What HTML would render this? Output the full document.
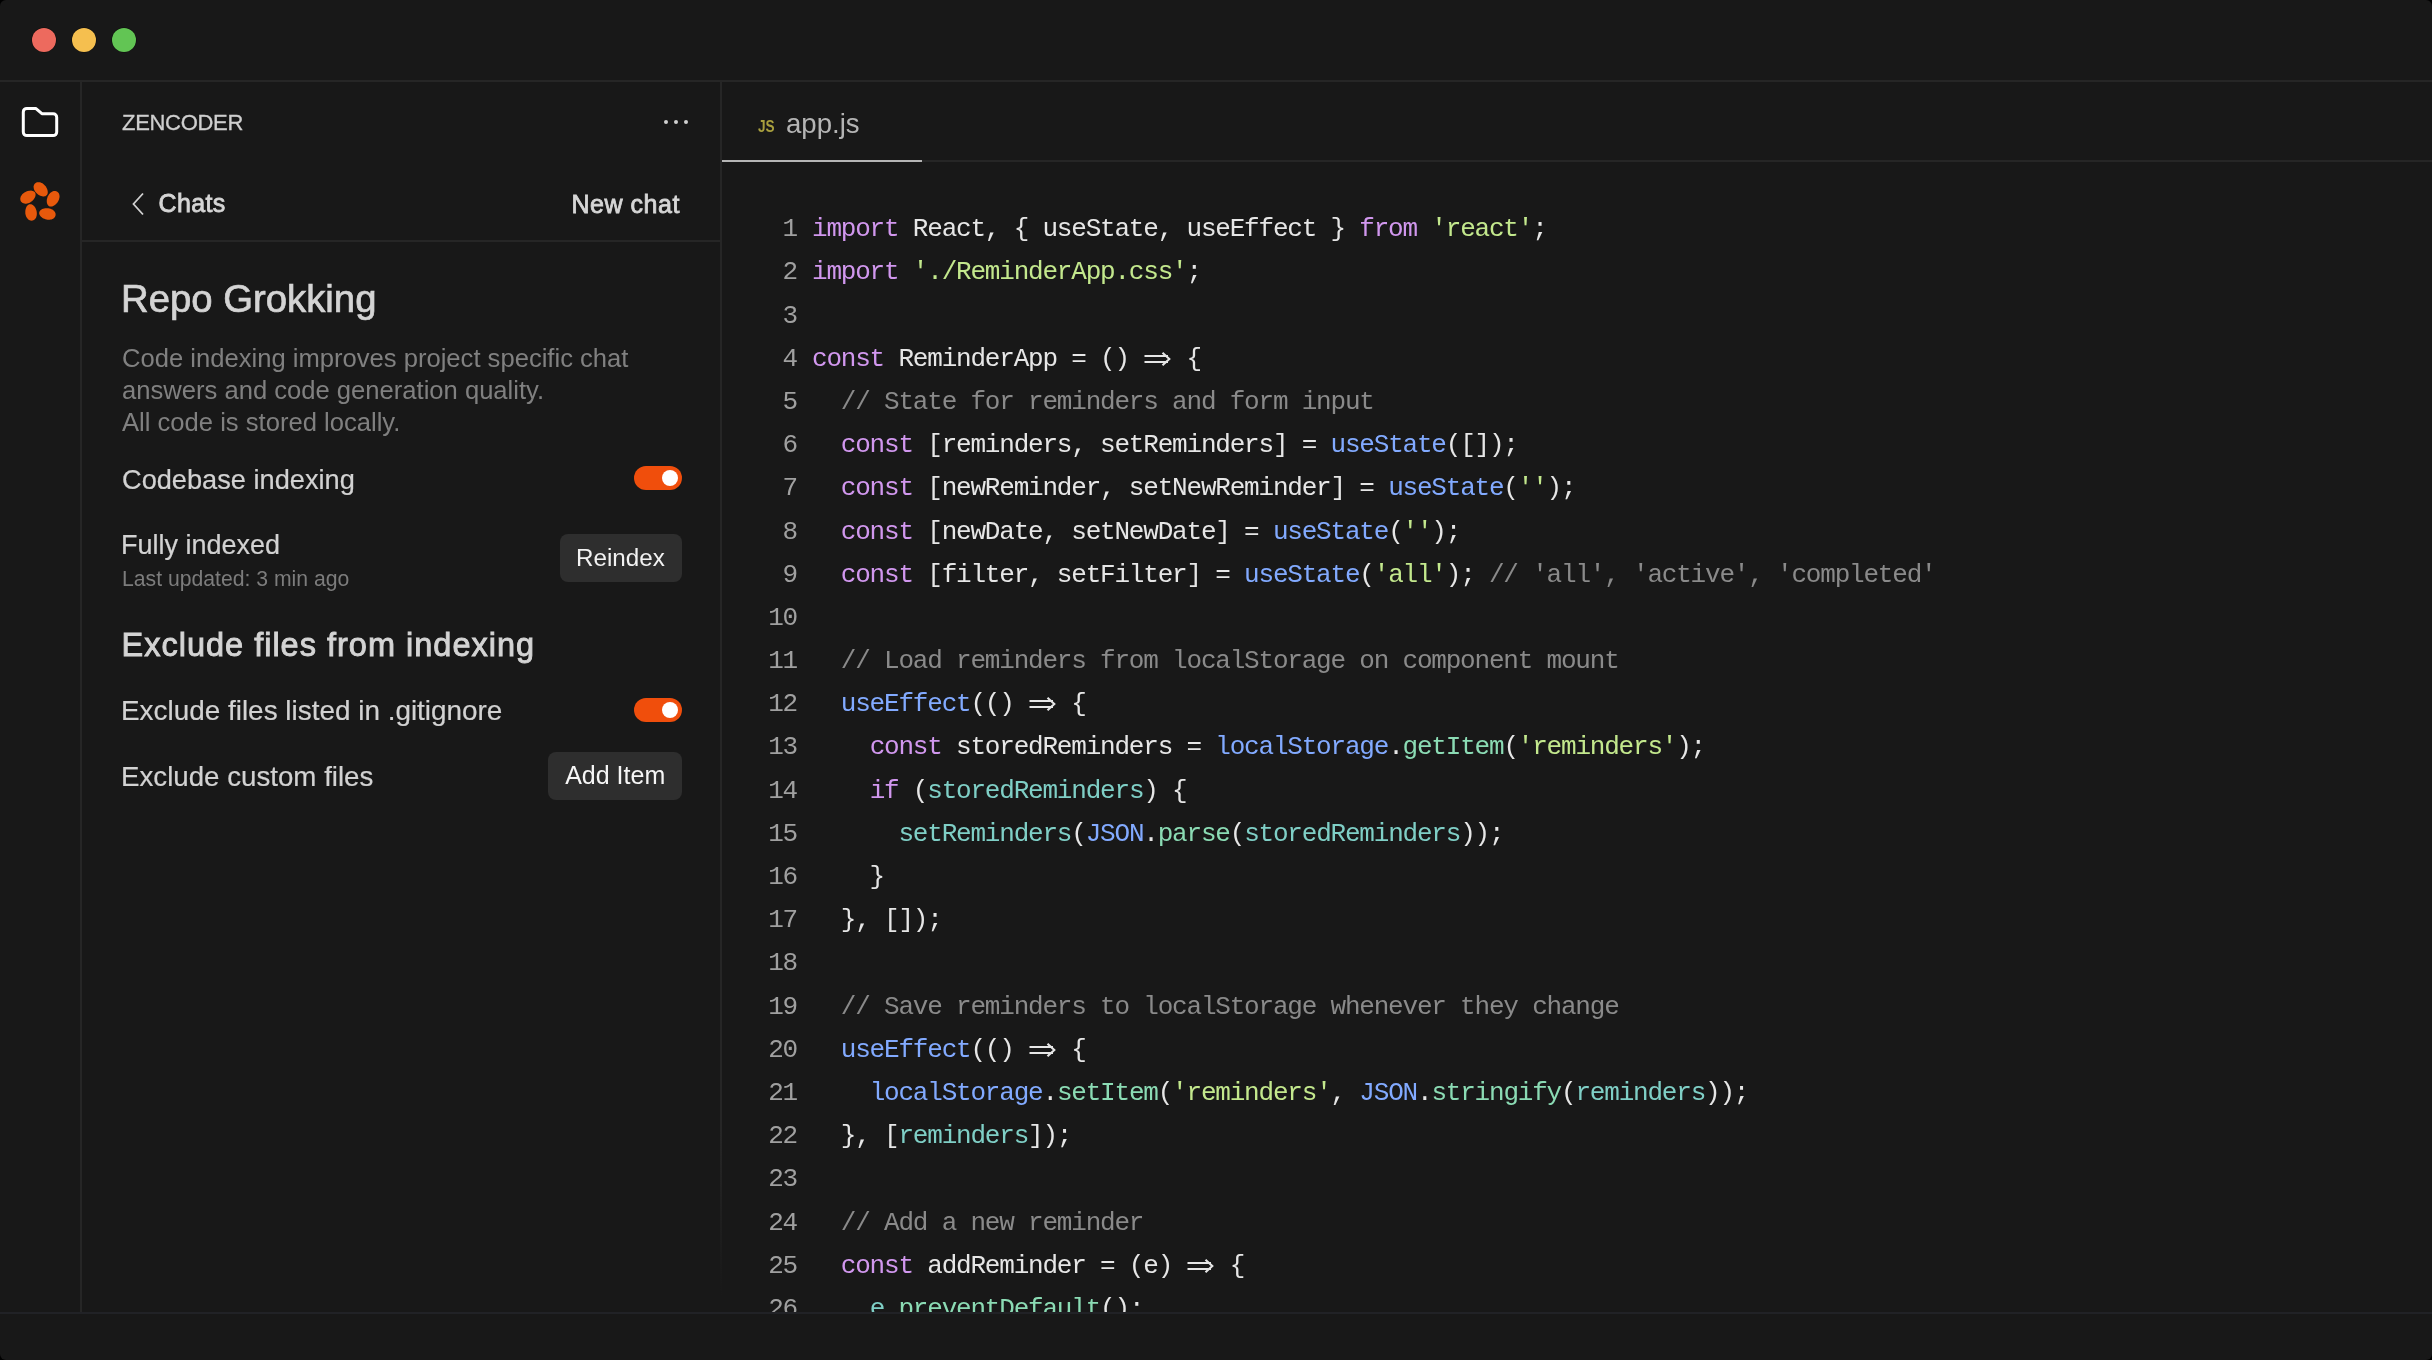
<!DOCTYPE html>
<html><head><meta charset="utf-8">
<style>
*{margin:0;padding:0;box-sizing:border-box}
html,body{width:2432px;height:1360px;overflow:hidden;background:#000}
body{font-family:"Liberation Sans",sans-serif;position:relative;-webkit-font-smoothing:antialiased}
.win{position:absolute;left:0;top:0;width:2432px;height:1360px;background:#181818;border-radius:6px;overflow:hidden;will-change:transform}
.abs{position:absolute;white-space:nowrap}
.hl{position:absolute;background:#262626}
.dot{position:absolute;border-radius:50%;width:24px;height:24px;top:28px;box-shadow:0 0 0 0.5px rgba(0,0,0,.5)}
.t{position:absolute;white-space:nowrap;line-height:1}
.btn{position:absolute;background:#2e2e2e;border-radius:8px}
.tog{position:absolute;width:48px;height:24px;border-radius:12px;background:#f04e0c}
.tog i{position:absolute;right:4px;top:4px;width:16px;height:16px;border-radius:50%;background:#fff}
.code{position:absolute;left:722px;top:162px;width:1710px;height:1150px;overflow:hidden}
.lines{position:absolute;left:0;top:46.2px;font-family:"Liberation Mono",monospace;font-size:26px;letter-spacing:-1.2px;line-height:43.2px;color:#e6e6e6}
.ln{height:43.2px;position:relative}
.n{position:absolute;left:0;width:75px;text-align:right;color:#a0a0a0;white-space:pre}
.cd{position:absolute;left:90px;white-space:pre}
.k{color:#d197ee}.s{color:#c3e88d}.b{color:#82aaff}.t2{color:#8bdbb4}.v{color:#7fcfc6}.c{color:#8a8a8a}
span.t{position:static;color:#89dcb8}
.ar{display:inline-block;width:28.8px;height:20px;vertical-align:-3px}
.ar svg{display:block}
</style></head><body>
<div class="win">
  <!-- traffic lights -->
  <div class="dot" style="left:32px;background:#ed6a5e"></div>
  <div class="dot" style="left:72px;background:#f5bf4f"></div>
  <div class="dot" style="left:112px;background:#62c554"></div>

  <!-- borders -->
  <div class="hl" style="left:0;top:80px;width:2432px;height:2px"></div>
  <div class="hl" style="left:80px;top:82px;width:2px;height:1230px"></div>
  <div class="hl" style="left:720px;top:82px;width:2px;height:1230px;background:linear-gradient(to bottom,#262626 0,#262626 1050px,rgba(38,38,38,0) 1215px)"></div>
  <div class="hl" style="left:82px;top:240px;width:638px;height:2px"></div>
  <div class="hl" style="left:722px;top:160px;width:1710px;height:2px"></div>
  <div class="hl" style="left:722px;top:160px;width:200px;height:2px;background:#b5b5b5"></div>
  <div class="hl" style="left:0;top:1312px;width:2432px;height:2px;background:#212226"></div>

  <!-- activity bar icons -->
  <svg class="abs" style="left:20px;top:104px" width="40" height="36" viewBox="0 0 40 36">
    <path d="M3.3 7.9a3.5 3.5 0 0 1 3.5-3.5h8.9l6.2 5.3h11.3a3.5 3.5 0 0 1 3.5 3.5v14.9a3.5 3.5 0 0 1-3.5 3.5H6.8a3.5 3.5 0 0 1-3.5-3.5z" fill="none" stroke="#fff" stroke-width="3" stroke-linejoin="round"/>
  </svg>
  <svg class="abs" style="left:15px;top:176px" width="50" height="50" viewBox="0 0 50 50">
    <g fill="#e8590c"><path d="M8.30 0.00 L8.23 0.70 L8.02 1.39 L7.67 2.06 L7.19 2.70 L6.58 3.30 L5.87 3.86 L5.05 4.36 L4.15 4.79 L3.18 5.15 L2.15 5.42 L1.08 5.61 L0.00 5.70 L-1.08 5.70 L-2.15 5.59 L-3.18 5.39 L-4.15 5.08 L-5.05 4.69 L-5.87 4.20 L-6.58 3.64 L-7.19 3.00 L-7.67 2.30 L-8.02 1.56 L-8.23 0.79 L-8.30 0.00 L-8.23 -0.79 L-8.02 -1.56 L-7.67 -2.30 L-7.19 -3.00 L-6.58 -3.64 L-5.87 -4.20 L-5.05 -4.69 L-4.15 -5.08 L-3.18 -5.39 L-2.15 -5.59 L-1.08 -5.70 L-0.00 -5.70 L1.08 -5.61 L2.15 -5.42 L3.18 -5.15 L4.15 -4.79 L5.05 -4.36 L5.87 -3.86 L6.58 -3.30 L7.19 -2.70 L7.67 -2.06 L8.02 -1.39 L8.23 -0.70Z" transform="translate(25.8 13.4) rotate(46)"/><path d="M8.30 0.00 L8.23 0.70 L8.02 1.39 L7.67 2.06 L7.19 2.70 L6.58 3.30 L5.87 3.86 L5.05 4.36 L4.15 4.79 L3.18 5.15 L2.15 5.42 L1.08 5.61 L0.00 5.70 L-1.08 5.70 L-2.15 5.59 L-3.18 5.39 L-4.15 5.08 L-5.05 4.69 L-5.87 4.20 L-6.58 3.64 L-7.19 3.00 L-7.67 2.30 L-8.02 1.56 L-8.23 0.79 L-8.30 0.00 L-8.23 -0.79 L-8.02 -1.56 L-7.67 -2.30 L-7.19 -3.00 L-6.58 -3.64 L-5.87 -4.20 L-5.05 -4.69 L-4.15 -5.08 L-3.18 -5.39 L-2.15 -5.59 L-1.08 -5.70 L-0.00 -5.70 L1.08 -5.61 L2.15 -5.42 L3.18 -5.15 L4.15 -4.79 L5.05 -4.36 L5.87 -3.86 L6.58 -3.30 L7.19 -2.70 L7.67 -2.06 L8.02 -1.39 L8.23 -0.70Z" transform="translate(38 22.8) rotate(118)"/><path d="M8.30 0.00 L8.23 0.70 L8.02 1.39 L7.67 2.06 L7.19 2.70 L6.58 3.30 L5.87 3.86 L5.05 4.36 L4.15 4.79 L3.18 5.15 L2.15 5.42 L1.08 5.61 L0.00 5.70 L-1.08 5.70 L-2.15 5.59 L-3.18 5.39 L-4.15 5.08 L-5.05 4.69 L-5.87 4.20 L-6.58 3.64 L-7.19 3.00 L-7.67 2.30 L-8.02 1.56 L-8.23 0.79 L-8.30 0.00 L-8.23 -0.79 L-8.02 -1.56 L-7.67 -2.30 L-7.19 -3.00 L-6.58 -3.64 L-5.87 -4.20 L-5.05 -4.69 L-4.15 -5.08 L-3.18 -5.39 L-2.15 -5.59 L-1.08 -5.70 L-0.00 -5.70 L1.08 -5.61 L2.15 -5.42 L3.18 -5.15 L4.15 -4.79 L5.05 -4.36 L5.87 -3.86 L6.58 -3.30 L7.19 -2.70 L7.67 -2.06 L8.02 -1.39 L8.23 -0.70Z" transform="translate(32.4 37.9) rotate(190)"/><path d="M8.30 0.00 L8.23 0.70 L8.02 1.39 L7.67 2.06 L7.19 2.70 L6.58 3.30 L5.87 3.86 L5.05 4.36 L4.15 4.79 L3.18 5.15 L2.15 5.42 L1.08 5.61 L0.00 5.70 L-1.08 5.70 L-2.15 5.59 L-3.18 5.39 L-4.15 5.08 L-5.05 4.69 L-5.87 4.20 L-6.58 3.64 L-7.19 3.00 L-7.67 2.30 L-8.02 1.56 L-8.23 0.79 L-8.30 0.00 L-8.23 -0.79 L-8.02 -1.56 L-7.67 -2.30 L-7.19 -3.00 L-6.58 -3.64 L-5.87 -4.20 L-5.05 -4.69 L-4.15 -5.08 L-3.18 -5.39 L-2.15 -5.59 L-1.08 -5.70 L-0.00 -5.70 L1.08 -5.61 L2.15 -5.42 L3.18 -5.15 L4.15 -4.79 L5.05 -4.36 L5.87 -3.86 L6.58 -3.30 L7.19 -2.70 L7.67 -2.06 L8.02 -1.39 L8.23 -0.70Z" transform="translate(16 36.4) rotate(262)"/><path d="M8.30 0.00 L8.23 0.70 L8.02 1.39 L7.67 2.06 L7.19 2.70 L6.58 3.30 L5.87 3.86 L5.05 4.36 L4.15 4.79 L3.18 5.15 L2.15 5.42 L1.08 5.61 L0.00 5.70 L-1.08 5.70 L-2.15 5.59 L-3.18 5.39 L-4.15 5.08 L-5.05 4.69 L-5.87 4.20 L-6.58 3.64 L-7.19 3.00 L-7.67 2.30 L-8.02 1.56 L-8.23 0.79 L-8.30 0.00 L-8.23 -0.79 L-8.02 -1.56 L-7.67 -2.30 L-7.19 -3.00 L-6.58 -3.64 L-5.87 -4.20 L-5.05 -4.69 L-4.15 -5.08 L-3.18 -5.39 L-2.15 -5.59 L-1.08 -5.70 L-0.00 -5.70 L1.08 -5.61 L2.15 -5.42 L3.18 -5.15 L4.15 -4.79 L5.05 -4.36 L5.87 -3.86 L6.58 -3.30 L7.19 -2.70 L7.67 -2.06 L8.02 -1.39 L8.23 -0.70Z" transform="translate(13 21) rotate(328)"/></g>
  </svg>

  <!-- sidebar -->
  <div class="t" style="left:122px;top:111.6px;font-size:22px;letter-spacing:-0.3px;color:#cfcfcf;-webkit-text-stroke:0.3px #cfcfcf">ZENCODER</div>
  <div class="abs" style="left:664px;top:120px;width:4px;height:4px;border-radius:50%;background:#d0d0d0"></div>
  <div class="abs" style="left:674px;top:120px;width:4px;height:4px;border-radius:50%;background:#d0d0d0"></div>
  <div class="abs" style="left:684px;top:120px;width:4px;height:4px;border-radius:50%;background:#d0d0d0"></div>

  <svg class="abs" style="left:128px;top:190px" width="20" height="28" viewBox="0 0 20 28">
    <path d="M15 3.5L5.5 14L15 24.5" fill="none" stroke="#d0d0d0" stroke-width="1.8"/>
  </svg>
  <div class="t" style="left:158.5px;top:191.2px;font-size:25px;letter-spacing:0.35px;color:#d6d6d6;-webkit-text-stroke:0.8px #d6d6d6">Chats</div>
  <div class="t" style="right:1752px;top:191.9px;font-size:25px;letter-spacing:0.55px;color:#d6d6d6;-webkit-text-stroke:0.8px #d6d6d6">New chat</div>

  <div class="t" style="left:121px;top:280.1px;font-size:38.3px;color:#d4d4d4;-webkit-text-stroke:0.7px #d4d4d4">Repo Grokking</div>
  <div class="abs" style="left:122px;top:341.5px;font-size:25.6px;line-height:32px;color:#808080">Code indexing improves project specific chat<br>answers and code generation quality.<br>All code is stored locally.</div>

  <div class="t" style="left:122px;top:465.5px;font-size:27.2px;color:#d2d2d2;-webkit-text-stroke:0.2px #d2d2d2">Codebase indexing</div>
  <div class="tog" style="left:634px;top:466px"><i></i></div>

  <div class="t" style="left:121px;top:532px;font-size:27px;color:#d2d2d2;-webkit-text-stroke:0.2px #d2d2d2">Fully indexed</div>
  <div class="t" style="left:122px;top:568.3px;font-size:21.2px;color:#7c7c7c">Last updated: 3 min ago</div>
  <div class="btn" style="left:560px;top:534px;width:122px;height:48px"></div>
  <div class="t" style="left:576px;top:545.8px;font-size:24.2px;color:#f2f2f2">Reindex</div>

  <div class="t" style="left:121.5px;top:629.4px;font-size:32.5px;letter-spacing:1px;color:#d4d4d4;-webkit-text-stroke:0.9px #d4d4d4">Exclude files from indexing</div>

  <div class="t" style="left:121px;top:697px;font-size:27.9px;color:#d2d2d2;-webkit-text-stroke:0.2px #d2d2d2">Exclude files listed in .gitignore</div>
  <div class="tog" style="left:634px;top:698px"><i></i></div>

  <div class="t" style="left:121px;top:763.3px;font-size:27.7px;color:#d2d2d2;-webkit-text-stroke:0.2px #d2d2d2">Exclude custom files</div>
  <div class="btn" style="left:548px;top:752px;width:134px;height:48px"></div>
  <div class="t" style="left:565.2px;top:762.5px;font-size:25px;color:#f6f6f6">Add Item</div>

  <!-- editor tab -->
  <div class="t" style="left:757.5px;top:118px;font-size:17px;font-weight:700;color:#a89f3e;transform:scaleX(0.8);transform-origin:left">JS</div>
  <div class="t" style="left:786px;top:109.8px;font-size:27.6px;color:#b4b4b4">app.js</div>

  <!-- code -->
  <div class="code"><div class="lines">
<div class="ln"><span class="n">1</span><span class="cd"><span class="k">import</span> React, { useState, useEffect } <span class="k">from</span> <span class="s">&#x27;react&#x27;</span>;</span></div>
<div class="ln"><span class="n">2</span><span class="cd"><span class="k">import</span> <span class="s">&#x27;./ReminderApp.css&#x27;</span>;</span></div>
<div class="ln"><span class="n">3</span><span class="cd"></span></div>
<div class="ln"><span class="n">4</span><span class="cd"><span class="k">const</span> ReminderApp = () <span class="ar"><svg width="28.8" height="20" viewBox="0 0 28.8 20"><path d="M1.5 7H25M1.5 13H25M19.5 3.8L26.3 10L19.5 16.2" fill="none" stroke="currentColor" stroke-width="2.1" stroke-linejoin="miter" stroke-linecap="butt"/></svg></span> {</span></div>
<div class="ln"><span class="n">5</span><span class="cd">  <span class="c">// State for reminders and form input</span></span></div>
<div class="ln"><span class="n">6</span><span class="cd">  <span class="k">const</span> [reminders, setReminders] = <span class="b">useState</span>([]);</span></div>
<div class="ln"><span class="n">7</span><span class="cd">  <span class="k">const</span> [newReminder, setNewReminder] = <span class="b">useState</span>(<span class="s">&#x27;&#x27;</span>);</span></div>
<div class="ln"><span class="n">8</span><span class="cd">  <span class="k">const</span> [newDate, setNewDate] = <span class="b">useState</span>(<span class="s">&#x27;&#x27;</span>);</span></div>
<div class="ln"><span class="n">9</span><span class="cd">  <span class="k">const</span> [filter, setFilter] = <span class="b">useState</span>(<span class="s">&#x27;all&#x27;</span>); <span class="c">// &#x27;all&#x27;, &#x27;active&#x27;, &#x27;completed&#x27;</span></span></div>
<div class="ln"><span class="n">10</span><span class="cd"></span></div>
<div class="ln"><span class="n">11</span><span class="cd">  <span class="c">// Load reminders from localStorage on component mount</span></span></div>
<div class="ln"><span class="n">12</span><span class="cd">  <span class="b">useEffect</span>(() <span class="ar"><svg width="28.8" height="20" viewBox="0 0 28.8 20"><path d="M1.5 7H25M1.5 13H25M19.5 3.8L26.3 10L19.5 16.2" fill="none" stroke="currentColor" stroke-width="2.1" stroke-linejoin="miter" stroke-linecap="butt"/></svg></span> {</span></div>
<div class="ln"><span class="n">13</span><span class="cd">    <span class="k">const</span> storedReminders = <span class="b">localStorage</span>.<span class="t2">getItem</span>(<span class="s">&#x27;reminders&#x27;</span>);</span></div>
<div class="ln"><span class="n">14</span><span class="cd">    <span class="k">if</span> (<span class="v">storedReminders</span>) {</span></div>
<div class="ln"><span class="n">15</span><span class="cd">      <span class="v">setReminders</span>(<span class="b">JSON</span>.<span class="t2">parse</span>(<span class="v">storedReminders</span>));</span></div>
<div class="ln"><span class="n">16</span><span class="cd">    }</span></div>
<div class="ln"><span class="n">17</span><span class="cd">  }, []);</span></div>
<div class="ln"><span class="n">18</span><span class="cd"></span></div>
<div class="ln"><span class="n">19</span><span class="cd">  <span class="c">// Save reminders to localStorage whenever they change</span></span></div>
<div class="ln"><span class="n">20</span><span class="cd">  <span class="b">useEffect</span>(() <span class="ar"><svg width="28.8" height="20" viewBox="0 0 28.8 20"><path d="M1.5 7H25M1.5 13H25M19.5 3.8L26.3 10L19.5 16.2" fill="none" stroke="currentColor" stroke-width="2.1" stroke-linejoin="miter" stroke-linecap="butt"/></svg></span> {</span></div>
<div class="ln"><span class="n">21</span><span class="cd">    <span class="b">localStorage</span>.<span class="t2">setItem</span>(<span class="s">&#x27;reminders&#x27;</span>, <span class="b">JSON</span>.<span class="t2">stringify</span>(<span class="v">reminders</span>));</span></div>
<div class="ln"><span class="n">22</span><span class="cd">  }, [<span class="v">reminders</span>]);</span></div>
<div class="ln"><span class="n">23</span><span class="cd"></span></div>
<div class="ln"><span class="n">24</span><span class="cd">  <span class="c">// Add a new reminder</span></span></div>
<div class="ln"><span class="n">25</span><span class="cd">  <span class="k">const</span> addReminder = (e) <span class="ar"><svg width="28.8" height="20" viewBox="0 0 28.8 20"><path d="M1.5 7H25M1.5 13H25M19.5 3.8L26.3 10L19.5 16.2" fill="none" stroke="currentColor" stroke-width="2.1" stroke-linejoin="miter" stroke-linecap="butt"/></svg></span> {</span></div>
<div class="ln"><span class="n">26</span><span class="cd">    <span class="v">e</span>.<span class="t2">preventDefault</span>();</span></div>
  </div></div>
</div>
</body></html>
